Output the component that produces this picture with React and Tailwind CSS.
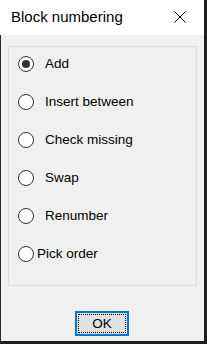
import React from 'react';

const options = [
  { label: 'Add', checked: true },
  { label: 'Insert between' },
  { label: 'Check missing' },
  { label: 'Swap' },
  { label: 'Renumber' },
  { label: 'Pick order', tight: true },
];

const Radio = ({ label, checked, tight }) => (
  <div className="flex items-center h-4">
    <span className="w-4 h-4 shrink-0 rounded-full border border-[#333] bg-white flex items-center justify-center">
      {checked && <span className="w-2 h-2 rounded-full bg-[#333]" />}
    </span>
    <span className={`${tight ? 'ml-[3px]' : 'ml-[11px]'} text-[13.5px] leading-none text-black`}>
      {label}
    </span>
  </div>
);

export default function App() {
  return (
    <div
      className="w-[207px] h-[344px] bg-[#1f1f1f] overflow-hidden"
      style={{ fontFamily: '"Liberation Sans", Arial, sans-serif' }}
    >
      <div className="w-[204px] h-[341px] flex flex-col">
        {/* title bar */}
        <div className="h-[35px] shrink-0 bg-white flex items-center justify-between pl-[11px] pr-[18px]">
          <span className="text-[15px] text-black pb-[1px]">Block numbering</span>
          <svg width="12" height="12" viewBox="0 0 12 12" className="mb-[2px]">
            <path d="M0.5 0.5 L11.5 11.5 M11.5 0.5 L0.5 11.5" stroke="#000" strokeWidth="1" />
          </svg>
        </div>

        {/* body */}
        <div className="flex-1 bg-[#f0f0f0] border-l border-[#2b2b2b] flex flex-col">
          <div className="ml-[7px] mt-[11px] w-[189px] h-[240px] border border-[#dcdcdc] pt-[9px] pl-[9px] flex flex-col gap-[22px]">
            {options.map((o) => (
              <Radio key={o.label} {...o} />
            ))}
          </div>

          <div className="ml-[74px] mt-[25px] w-[54px] h-[25px] border-2 border-[#0078d7] bg-[#e1e1e1] p-px">
            <div className="w-full h-full border border-dotted border-black flex items-center justify-center">
              <span className="text-[13.5px] leading-none text-black">OK</span>
            </div>
          </div>
        </div>
      </div>
    </div>
  );
}
